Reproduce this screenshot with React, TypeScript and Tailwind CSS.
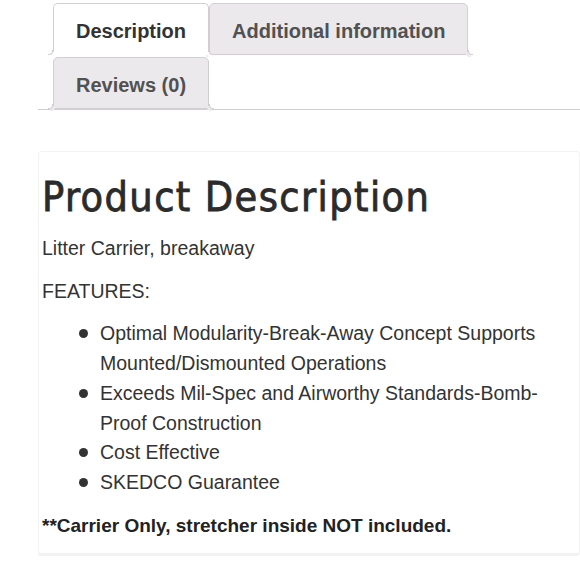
import React from 'react';

const tabs = [
  { id: 'description', label: 'Description' },
  { id: 'additional', label: 'Additional information' },
  { id: 'reviews', label: 'Reviews (0)' },
];

const features = [
  'Optimal Modularity-Break-Away Concept Supports Mounted/Dismounted Operations',
  'Exceeds Mil-Spec and Airworthy Standards-Bomb-Proof Construction',
  'Cost Effective',
  'SKEDCO Guarantee',
];

const Tab: React.FC<{ label: string; active?: boolean }> = ({ label, active }) => (
  <li
    className={
      'relative h-[52px] flex items-center pt-[3px] px-[22px] border border-[#d3ced2] rounded-t-[5px] text-[20px] font-bold ' +
      (active ? 'bg-white text-[#333] border-b-white z-10' : 'bg-[#ebe9eb] text-[#515151]')
    }
  >
    {label}
    <span
      className={
        'absolute -left-[6px] -bottom-px w-[5px] h-[5px] border-r border-b border-[#d3ced2] rounded-br-[4px] ' +
        (active ? 'shadow-[2px_2px_0_#fff]' : 'shadow-[2px_2px_0_#ebe9eb]')
      }
    />
    <span
      className={
        'absolute -right-[6px] -bottom-px w-[5px] h-[5px] border-l border-b border-[#d3ced2] rounded-bl-[4px] ' +
        (active ? 'shadow-[-2px_2px_0_#fff]' : 'shadow-[-2px_2px_0_#ebe9eb]')
      }
    />
  </li>
);

export default function App() {
  return (
    <div
      className="w-[580px] h-[580px] overflow-hidden bg-white pl-[38px] text-[#333]"
      style={{ fontFamily: '"Liberation Sans", Arial, sans-serif' }}
    >
      <ul className="flex flex-wrap gap-y-[2px] pl-[15px] pt-[3px] border-b border-[#d3ced2]">
        <Tab label={tabs[0].label} active />
        <Tab label={tabs[1].label} />
        <Tab label={tabs[2].label} />
      </ul>

      <div className="mt-[41px] border border-[#f2f2f2] rounded-[3px] shadow-[0_2px_0_#f2f2f2] pl-[3px] pt-[19px] pb-[13px]">
        <h2
          className="text-[41px] leading-[52px] tracking-[1.4px] text-[#2b2b2b] mb-[11px] [-webkit-text-stroke:0.8px_#2b2b2b]"
          style={{ fontFamily: '"DejaVu Sans Condensed", "DejaVu Sans", sans-serif' }}
        >
          Product Description
        </h2>
        <p className="text-[19.5px] leading-[29.7px] mb-[13px]">Litter Carrier, breakaway</p>
        <p className="text-[19.5px] leading-[29.7px] mb-[13px]">FEATURES:</p>
        <ul className="text-[19.5px] leading-[29.7px] mb-[13px] pr-[8px]">
          {features.map((f) => (
            <li key={f} className="flex">
              <span className="w-[58px] shrink-0 flex justify-end pr-[12px] pt-[10px]">
                <span className="w-[9px] h-[9px] rounded-full bg-[#333]" />
              </span>
              <span>{f}</span>
            </li>
          ))}
        </ul>
        <p className="text-[19px] leading-[29.7px] font-bold text-[#222]">
          **Carrier Only, stretcher inside NOT included.
        </p>
      </div>
    </div>
  );
}
